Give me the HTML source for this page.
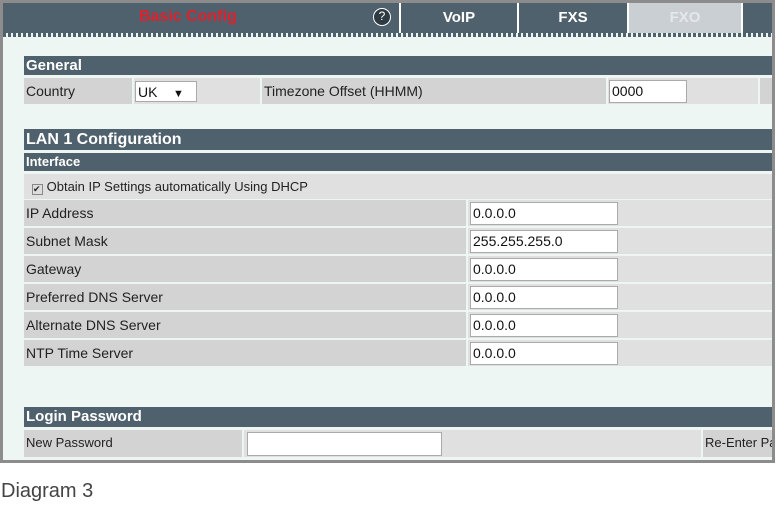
<!DOCTYPE html><html><head><style>
*{margin:0;padding:0;box-sizing:border-box}
body{width:777px;height:513px;background:#fff;font-family:"Liberation Sans",sans-serif;position:relative;overflow:hidden}
.a{position:absolute}
.frame{left:0;top:0;width:775px;height:463px;border:3px solid #8c8c8c;background:#eef6f3;overflow:hidden}
.nav{left:0;top:0;width:769px;height:30px;background:#4e616c}
.hd{background:#4e616c;color:#fff;font-weight:bold;left:21px;width:748px}
.lab{background:#d3d3d3;color:#222;font-size:14px;padding-left:2px;line-height:26px}
.val{background:#e0e0e0}
.in{background:#fff;border:1px solid #aaa;font-size:14px;color:#111;padding-left:2px;line-height:20px}
</style></head><body>
<div class="a frame">
<div class="a nav"></div>
<div class="a" style="left:136px;top:5px;color:#e0202c;font-weight:bold;font-size:16px">Basic Config</div>
<div class="a" style="left:370px;top:5px;width:18px;height:18px;border:1.5px solid #fff;border-radius:50%;color:#fff;font-size:12px;text-align:center;line-height:15px;background:#2e3b42">?</div>
<div class="a" style="left:396px;top:0;width:2px;height:30px;background:#fff"></div>
<div class="a" style="left:398px;top:0;width:116px;height:30px;color:#fff;font-weight:bold;font-size:15px;text-align:center;line-height:30px">VoIP</div>
<div class="a" style="left:514px;top:0;width:2px;height:30px;background:#fff"></div>
<div class="a" style="left:516px;top:0;width:108px;height:30px;color:#fff;font-weight:bold;font-size:15px;text-align:center;line-height:30px">FXS</div>
<div class="a" style="left:624px;top:0;width:2px;height:30px;background:#fff"></div>
<div class="a" style="left:626px;top:0;width:112px;height:30px;background:#c9cfd2;color:#e4e8ea;font-weight:bold;font-size:15px;text-align:center;line-height:30px">FXO</div>
<div class="a" style="left:738px;top:0;width:2px;height:30px;background:#fff"></div>
<div class="a" style="left:0;top:30px;width:769px;height:4px;background:repeating-linear-gradient(90deg,#4e616c 0 3px,transparent 3px 5px)"></div>

<div class="a hd" style="top:53px;height:19px;font-size:15px;line-height:19px;padding-left:2px">General</div>
<div class="a lab" style="left:21px;top:75px;width:108px;height:26px">Country</div>
<div class="a val" style="left:131px;top:75px;width:126px;height:26px"></div>
<div class="a in" style="left:132px;top:78px;width:62px;height:21px">UK &nbsp;&nbsp;&nbsp;<span style="font-size:11px">▼</span></div>
<div class="a lab" style="left:259px;top:75px;width:344px;height:26px">Timezone Offset (HHMM)</div>
<div class="a val" style="left:605px;top:75px;width:150px;height:26px"></div>
<div class="a in" style="left:606px;top:77px;width:78px;height:23px">0000</div>
<div class="a lab" style="left:757px;top:75px;width:12px;height:26px"></div>

<div class="a hd" style="top:126px;height:21px;font-size:16px;line-height:21px;padding-left:2px">LAN 1 Configuration</div>
<div class="a hd" style="top:150px;height:18px;font-size:13px;line-height:18px;padding-left:2px">Interface</div>
<div class="a val" style="left:21px;top:171px;width:748px;height:25px;font-size:13px;line-height:25px;color:#222;padding-left:8px"><span style="display:inline-block;width:11px;height:11px;background:#ddd;border:1px solid #888;font-size:9px;line-height:9px;vertical-align:-1px">✔</span> Obtain IP Settings automatically Using DHCP</div>

<div class="a lab" style="left:21px;top:197px;width:442px;height:26px">IP Address</div><div class="a val" style="left:465px;top:197px;width:304px;height:26px"></div><div class="a in" style="left:467px;top:199px;width:148px;height:23px">0.0.0.0</div>
<div class="a lab" style="left:21px;top:225px;width:442px;height:26px">Subnet Mask</div><div class="a val" style="left:465px;top:225px;width:304px;height:26px"></div><div class="a in" style="left:467px;top:227px;width:148px;height:23px">255.255.255.0</div>
<div class="a lab" style="left:21px;top:253px;width:442px;height:26px">Gateway</div><div class="a val" style="left:465px;top:253px;width:304px;height:26px"></div><div class="a in" style="left:467px;top:255px;width:148px;height:23px">0.0.0.0</div>
<div class="a lab" style="left:21px;top:281px;width:442px;height:26px">Preferred DNS Server</div><div class="a val" style="left:465px;top:281px;width:304px;height:26px"></div><div class="a in" style="left:467px;top:283px;width:148px;height:23px">0.0.0.0</div>
<div class="a lab" style="left:21px;top:309px;width:442px;height:26px">Alternate DNS Server</div><div class="a val" style="left:465px;top:309px;width:304px;height:26px"></div><div class="a in" style="left:467px;top:311px;width:148px;height:23px">0.0.0.0</div>
<div class="a lab" style="left:21px;top:337px;width:442px;height:26px">NTP Time Server</div><div class="a val" style="left:465px;top:337px;width:304px;height:26px"></div><div class="a in" style="left:467px;top:339px;width:148px;height:23px">0.0.0.0</div>

<div class="a hd" style="top:404px;height:20px;font-size:15px;line-height:20px;padding-left:2px">Login Password</div>
<div class="a lab" style="left:21px;top:427px;width:218px;height:27px;font-size:13px">New Password</div>
<div class="a val" style="left:241px;top:427px;width:457px;height:27px"></div>
<div class="a in" style="left:244px;top:429px;width:195px;height:24px"></div>
<div class="a lab" style="left:700px;top:427px;width:69px;height:27px;font-size:13px;white-space:nowrap;overflow:hidden">Re-Enter Password</div>
</div>
<div class="a" style="left:1px;top:480px;font-size:20px;color:#444">Diagram 3</div>
</body></html>
